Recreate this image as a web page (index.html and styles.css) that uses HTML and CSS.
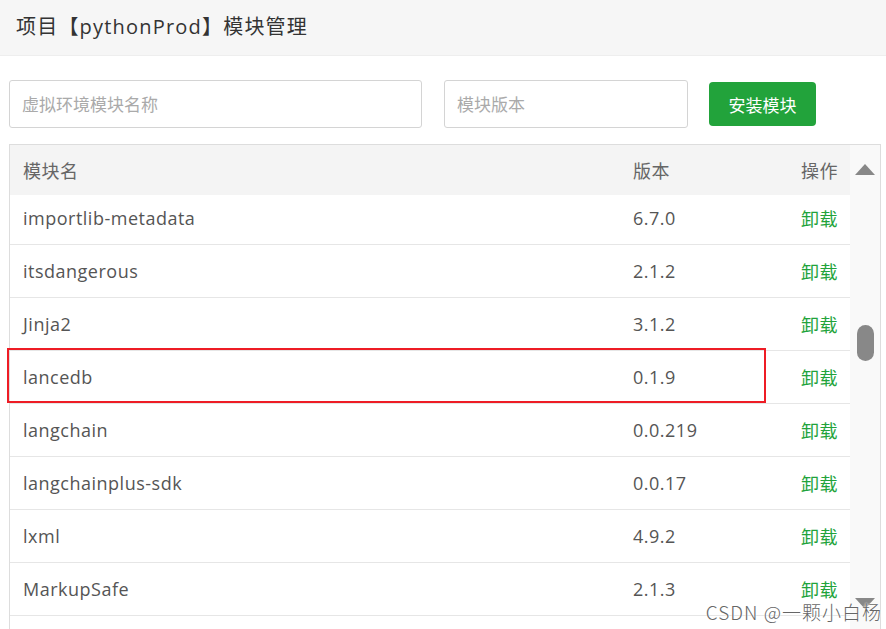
FILE: index.html
```html
<!DOCTYPE html>
<html lang="zh-CN">
<head>
  <meta charset="UTF-8">
  <title>模块管理</title>
  <link rel="stylesheet" href="styles.css">
</head>
<body>

  <!-- Title bar -->
  <div class="title-bar">项目【pythonProd】模块管理</div>

  <!-- Install form -->
  <div class="toolbar">
    <input type="text" class="name-input" placeholder="虚拟环境模块名称">
    <input type="text" class="version-input" placeholder="模块版本">
    <button class="install-btn">安装模块</button>
  </div>

  <!-- Module table -->
  <div class="table-wrap">
    <div class="table-body">
      <div class="table-head">
        <span class="col-name">模块名</span>
        <span class="col-ver">版本</span>
        <span class="col-op">操作</span>
      </div>
      <div class="rows">
        <div class="row"><span class="col-name">importlib-metadata</span><span class="col-ver">6.7.0</span><a class="col-op" href="#">卸载</a></div>
        <div class="row"><span class="col-name">itsdangerous</span><span class="col-ver">2.1.2</span><a class="col-op" href="#">卸载</a></div>
        <div class="row"><span class="col-name">Jinja2</span><span class="col-ver">3.1.2</span><a class="col-op" href="#">卸载</a></div>
        <div class="row"><span class="col-name">lancedb</span><span class="col-ver">0.1.9</span><a class="col-op" href="#">卸载</a></div>
        <div class="row"><span class="col-name">langchain</span><span class="col-ver">0.0.219</span><a class="col-op" href="#">卸载</a></div>
        <div class="row"><span class="col-name">langchainplus-sdk</span><span class="col-ver">0.0.17</span><a class="col-op" href="#">卸载</a></div>
        <div class="row"><span class="col-name">lxml</span><span class="col-ver">4.9.2</span><a class="col-op" href="#">卸载</a></div>
        <div class="row"><span class="col-name">MarkupSafe</span><span class="col-ver">2.1.3</span><a class="col-op" href="#">卸载</a></div>
      </div>
    </div>
    <div class="scrollbar">
      <span class="arrow-up"></span>
      <span class="thumb"></span>
      <span class="arrow-down"></span>
    </div>
    <!-- highlight around the lancedb row -->
    <div class="highlight"></div>
  </div>

  <div class="watermark">CSDN @一颗小白杨</div>

</body>
</html>
```

FILE: styles.css
```css
/* General */
body {
  margin: 0;
  font-family: "Open Sans", "Noto Sans CJK SC", sans-serif;
  color: #555;
  background: #fff;
  height: 629px;
  overflow: hidden;
  position: relative;
}

.title-bar {
  height: 56px;
  line-height: 54px;
  padding-left: 16px;
  font-size: 20px;
  letter-spacing: 1.2px;
  color: #333;
  background-color: #f6f6f6;
  border-bottom: 1px solid #eee;
  box-sizing: border-box;
}

/* Toolbar */
.toolbar {
  display: flex;
  align-items: center;
  padding: 24px 0 0 9px;
  height: 48px;
}

.toolbar input {
  height: 48px;
  box-sizing: border-box;
  border: 1px solid #d4d4d4;
  border-radius: 3px;
  padding: 0 12px;
  font-size: 17px;
  font-family: inherit;
  color: #555;
  outline: none;
}

.toolbar input::placeholder {
  color: #aaa;
}

.name-input {
  width: 413px;
}

.version-input {
  width: 244px;
  margin-left: 22px;
}

.install-btn {
  margin-left: 21px;
  width: 107px;
  height: 44px;
  border: none;
  border-radius: 4px;
  background-color: #22a33b;
  color: #fff;
  font-size: 17px;
  font-family: inherit;
  cursor: pointer;
}

/* Table */
.table-wrap {
  display: flex;
  position: relative;
  margin: 16px 0 0 9px;
  width: 872px;
  height: 500px;
  border: 1px solid #ddd;
  box-sizing: border-box;
}

.table-body {
  width: 840px;
}

.table-head,
.row {
  display: flex;
  align-items: center;
  padding: 0 12px 0 13px;
  font-size: 18px;
  letter-spacing: 0.5px;
}

.table-head {
  height: 50px;
  background-color: #f4f4f4;
  color: #666;
  position: relative;
  z-index: 1;
}

.rows {
  margin-top: -3px;
}

.row {
  height: 52px;
  border-bottom: 1px solid #e6e6e6;
}

.col-name {
  flex: 1;
}

.col-ver {
  width: 165px;
}

.col-op {
  width: 40px;
  text-align: right;
  color: #22a33b;
  text-decoration: none;
  white-space: nowrap;
}

.table-head .col-op {
  color: #666;
}

.highlight {
  position: absolute;
  left: -3px;
  top: 203px;
  width: 759px;
  height: 55px;
  border: 2px solid #ee1c25;
  box-sizing: border-box;
}

/* Fake scrollbar */
.scrollbar {
  width: 30px;
  background-color: #f9f9f9;
  position: relative;
}

.arrow-up {
  position: absolute;
  top: 19px;
  left: 5px;
  border-left: 10px solid transparent;
  border-right: 10px solid transparent;
  border-bottom: 11px solid #888;
}

.thumb {
  position: absolute;
  top: 180px;
  left: 7px;
  width: 17px;
  height: 36px;
  border-radius: 9px;
  background-color: #888;
}

.arrow-down {
  position: absolute;
  top: 453px;
  left: 5px;
  border-left: 10px solid transparent;
  border-right: 10px solid transparent;
  border-top: 11px solid #888;
}

.watermark {
  position: absolute;
  right: 4px;
  bottom: 4px;
  font-family: "Noto Sans CJK SC", sans-serif;
  font-weight: 300;
  font-size: 19px;
  letter-spacing: 1px;
  color: #666;
  text-shadow: 0 0 2px #fff, 0 0 2px #fff;
}
```
